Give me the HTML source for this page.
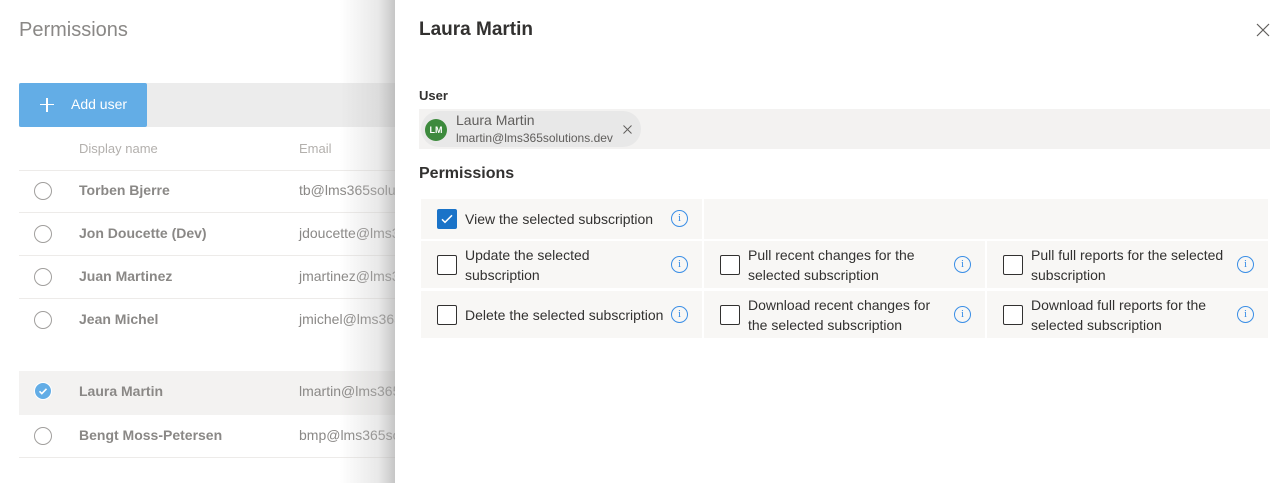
<!DOCTYPE html>
<html><head><style>
*{box-sizing:border-box;margin:0;padding:0}
body{width:1288px;height:483px;overflow:hidden;position:relative;font-family:"Segoe UI","Liberation Sans",sans-serif;background:#fff;color:#323130}
.left{position:absolute;left:0;top:0;width:395px;height:483px;background:#fff}
.h1{position:absolute;left:19px;top:19px;font-size:20px;color:#8a8886}
.bar{position:absolute;left:19px;top:83px;width:380px;height:44px;background:#ececec}
.btn{position:absolute;left:19px;top:83px;width:128px;height:44px;background:#63ade6;color:#fff;font-size:14px;border-radius:2px}
.btn span{position:absolute;left:52px;top:13px}
.btn i{position:absolute;left:21px;top:21px;width:14px;height:1.4px;background:#fff}
.btn i.v{left:27.3px;top:14.5px;width:1.4px;height:14px}
.hd{position:absolute;top:141px;font-size:13px;color:#b3b0ad}
.row{position:absolute;left:19px;width:380px;height:43px;border-bottom:1px solid #edebe9}
.row .n{position:absolute;left:60px;top:12px;font-size:14px;font-weight:600;color:#8a8886}
.row .e{position:absolute;left:280px;top:12px;font-size:14px;color:#8a8886;white-space:nowrap}
.row .c{position:absolute;left:15px;top:12px;width:18px;height:18px;border:1px solid #a19f9d;border-radius:50%}
.shade{position:absolute;left:340px;top:0;width:55px;height:483px;background:linear-gradient(90deg,rgba(255,255,255,0),rgba(190,190,190,.35) 70%,rgba(160,160,160,.6))}
.panel{position:absolute;left:395px;top:0;width:893px;height:483px;background:#fff}
.t{position:absolute;left:24px;top:19px;font-size:19px;font-weight:600;color:#323130}
.x{position:absolute;left:861px;top:23px;width:14px;height:14px}
.lab{position:absolute;font-size:14px;font-weight:600}
.picker{position:absolute;left:24px;top:109px;width:851px;height:40px;background:#f3f2f1}
.chip{position:absolute;left:2px;top:2px;width:220px;height:36px;background:#e8e8e8;border-radius:18px}
.av{position:absolute;left:4px;top:8px;width:22px;height:22px;border-radius:50%;background:#3d8a3d;color:#fff;font-size:9px;font-weight:700;text-align:center;line-height:22px}
.cell{position:absolute;background:#f8f7f5;width:281px}
.cb{position:absolute;left:16px;width:20px;height:20px;border:1px solid #323130;border-radius:2px;background:#fff}
.cb.on{background:#1a73c8;border-color:#1a73c8}
.ct{position:absolute;left:44px;font-size:14px;line-height:20px;color:#323130;white-space:nowrap}
.info{position:absolute;left:250px;width:17px;height:17px;border:1.3px solid #3a8ee6;border-radius:50%;color:#3a8ee6;font-size:11px;text-align:center;line-height:14px;font-family:"Liberation Serif",serif}
</style></head><body>
<div class="left">
<div class="h1">Permissions</div>
<div class="bar"></div>
<div class="btn"><i></i><i class="v"></i><span>Add user</span></div>
<div class="hd" style="left:79px">Display name</div>
<div class="hd" style="left:299px">Email</div>
<div class="row" style="top:127px;height:44px"></div>
<div class="row" style="top:170px"><div class="c"></div><div class="n">Torben Bjerre</div><div class="e">tb@lms365solutions.dev</div></div>
<div class="row" style="top:213px"><div class="c"></div><div class="n">Jon Doucette (Dev)</div><div class="e">jdoucette@lms365solutions.dev</div></div>
<div class="row" style="top:256px"><div class="c"></div><div class="n">Juan Martinez</div><div class="e">jmartinez@lms365solutions.dev</div></div>
<div class="row" style="top:299px;border:none"><div class="c"></div><div class="n">Jean Michel</div><div class="e">jmichel@lms365solutions.dev</div></div>
<div class="row" style="top:371px;height:44px;background:#f3f2f1;border:none"><div class="c" style="background:#63ade6;border-color:#fff;top:11px"><svg width="16" height="16" viewBox="0 0 16 16" style="position:absolute;left:0;top:0"><path d="M4.5 8.3l2.3 2.3 4.7-4.8" stroke="#fff" stroke-width="1.6" fill="none"/></svg></div><div class="n">Laura Martin</div><div class="e">lmartin@lms365solutions.dev</div></div>
<div class="row" style="top:415px"><div class="c"></div><div class="n">Bengt Moss-Petersen</div><div class="e">bmp@lms365solutions.dev</div></div>
</div>
<div class="shade"></div>
<div class="panel">
<div class="t">Laura Martin</div>
<svg class="x" viewBox="0 0 14 14"><path d="M1 1L13 13M13 1L1 13" stroke="#605e5c" stroke-width="1.2"/></svg>
<div class="lab" style="left:24px;top:88px;font-size:13px">User</div>
<div class="picker"><div class="chip"><div class="av">LM</div>
<div style="position:absolute;left:35px;top:1px;font-size:14px;color:#605e5c">Laura Martin</div>
<div style="position:absolute;left:35px;top:20px;font-size:12px;color:#605e5c">lmartin@lms365solutions.dev</div>
<svg style="position:absolute;left:202px;top:14px" width="9" height="9" viewBox="0 0 9 9"><path d="M.5 .5l8 8M8.5 .5l-8 8" stroke="#605e5c" stroke-width="1"/></svg></div></div>
<div class="lab" style="left:24px;top:165px;font-size:16px">Permissions</div>

<div class="cell" style="left:26px;top:199px;height:40px"><div class="cb on" style="top:10px"><svg width="18" height="18" viewBox="0 0 18 18"><path d="M4 9.3l3 3 7-7" stroke="#fff" stroke-width="1.5" fill="none"/></svg></div><div class="ct" style="top:10px">View the selected subscription</div><div class="info" style="top:11px">i</div></div>
<div class="cell" style="left:309px;top:199px;height:40px;width:564px"></div>

<div class="cell" style="left:26px;top:241px;height:47px"><div class="cb" style="top:14px"></div><div class="ct" style="top:4px">Update the selected<br>subscription</div><div class="info" style="top:15px">i</div></div>
<div class="cell" style="left:309px;top:241px;height:47px"><div class="cb" style="top:14px"></div><div class="ct" style="top:4px">Pull recent changes for the<br>selected subscription</div><div class="info" style="top:15px">i</div></div>
<div class="cell" style="left:592px;top:241px;height:47px"><div class="cb" style="top:14px"></div><div class="ct" style="top:4px">Pull full reports for the selected<br>subscription</div><div class="info" style="top:15px">i</div></div>

<div class="cell" style="left:26px;top:291px;height:47px"><div class="cb" style="top:14px"></div><div class="ct" style="top:14px">Delete the selected subscription</div><div class="info" style="top:15px">i</div></div>
<div class="cell" style="left:309px;top:291px;height:47px"><div class="cb" style="top:14px"></div><div class="ct" style="top:4px">Download recent changes for<br>the selected subscription</div><div class="info" style="top:15px">i</div></div>
<div class="cell" style="left:592px;top:291px;height:47px"><div class="cb" style="top:14px"></div><div class="ct" style="top:4px">Download full reports for the<br>selected subscription</div><div class="info" style="top:15px">i</div></div>
</div>
</body></html>
